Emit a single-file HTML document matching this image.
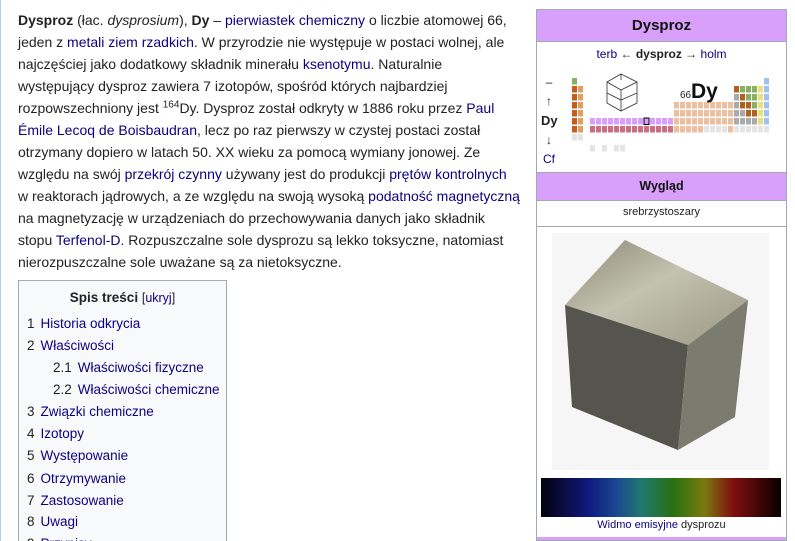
<!DOCTYPE html>
<html><head><meta charset="utf-8"><style>
*{margin:0;padding:0;box-sizing:border-box}
html,body{width:795px;height:541px;overflow:hidden}
body{background:#fff;font-family:"Liberation Sans",sans-serif;color:#222;position:relative}
a{color:#0b0080;text-decoration:none}
.lb{position:absolute;left:0;top:0;width:1px;height:541px;background:#a7d7f9}
.p{position:absolute;left:18px;top:9px;width:512px;font-size:14px;line-height:22px;white-space:nowrap}
.toc{position:absolute;left:18px;top:280px;width:209px;height:261px;background:#f8f9fa;border:1px solid #a2a9b1;border-bottom:none;font-size:13.5px;overflow:hidden}
.toc .t{position:absolute;top:9px;left:0;width:100%;text-align:center;font-weight:bold}
.toc .t span{font-weight:normal;font-size:12.5px}
.toc div.i{position:absolute;left:8px;white-space:nowrap}
.toc .n{color:#222;margin-right:6px}
.ib{position:absolute;left:536px;top:9px;width:251px;height:532px;border:1px solid #a2a9b1;background:#fff}
.h{position:absolute;left:0;width:249px;background:#d8a0fa;text-align:center;font-weight:bold;color:#111}
.c{position:absolute;font-size:12px;text-align:center;white-space:nowrap}
</style></head><body>
<div class="lb"></div>
<div class="p"><b>Dysproz</b> (łac. <i>dysprosium</i>), <b>Dy</b> – <a>pierwiastek chemiczny</a> o liczbie atomowej 66,<br>jeden z <a>metali ziem rzadkich</a>. W przyrodzie nie występuje w postaci wolnej, ale<br>najczęściej jako dodatkowy składnik minerału <a>ksenotymu</a>. Naturalnie<br>występujący dysproz zawiera 7 izotopów, spośród których najbardziej<br>rozpowszechniony jest <sup style="font-size:10px;line-height:0">164</sup>Dy. Dysproz został odkryty w 1886 roku przez <a>Paul</a><br><a>Émile Lecoq de Boisbaudran</a>, lecz po raz pierwszy w czystej postaci został<br>otrzymany dopiero w latach 50. XX wieku za pomocą wymiany jonowej. Ze<br>względu na swój <a>przekrój czynny</a> używany jest do produkcji <a>prętów kontrolnych</a><br>w reaktorach jądrowych, a ze względu na swoją wysoką <a>podatność magnetyczną</a><br>na magnetyzację w urządzeniach do przechowywania danych jako składnik<br>stopu <a>Terfenol-D</a>. Rozpuszczalne sole dysprozu są lekko toksyczne, natomiast<br>nierozpuszczalne sole uważane są za nietoksyczne.</div>

<div class="toc">
<div class="t">Spis treści <span>[<a>ukryj</a>]</span></div>
<div class="i" style="top:35px"><span class="n">1</span><a>Historia odkrycia</a></div>
<div class="i" style="top:57px"><span class="n">2</span><a>Właściwości</a></div>
<div class="i" style="top:79px;left:34px"><span class="n">2.1</span><a>Właściwości fizyczne</a></div>
<div class="i" style="top:101px;left:34px"><span class="n">2.2</span><a>Właściwości chemiczne</a></div>
<div class="i" style="top:123px"><span class="n">3</span><a>Związki chemiczne</a></div>
<div class="i" style="top:145px"><span class="n">4</span><a>Izotopy</a></div>
<div class="i" style="top:167px"><span class="n">5</span><a>Występowanie</a></div>
<div class="i" style="top:190px"><span class="n">6</span><a>Otrzymywanie</a></div>
<div class="i" style="top:212px"><span class="n">7</span><a>Zastosowanie</a></div>
<div class="i" style="top:233px"><span class="n">8</span><a>Uwagi</a></div>
<div class="i" style="top:255px"><span class="n">9</span><a>Przypisy</a></div>
</div>

<div class="ib">
<div class="h" style="top:0;height:31px;line-height:31px;font-size:15px">Dysproz</div>
<div style="position:absolute;top:31px;left:0;width:249px;height:1px;background:#a2a9b1"></div>
<div class="c" style="top:37px;left:0;width:249px;font-size:12px"><a>terb</a> ← <b>dysproz</b> → <a>holm</a></div>
<div class="c" style="left:4px;top:63px;width:16px;font-size:12px;line-height:19px;text-align:center">–<br>↑<br><b style="font-size:13px">Dy</b><br>↓<br><a>Cf</a></div>
<div style="position:absolute;top:162px;left:0;width:249px;height:1px;background:#a2a9b1"></div>
<div class="h" style="top:163px;height:27px;line-height:27px;font-size:12.5px">Wygląd</div>
<div style="position:absolute;top:190px;left:0;width:249px;height:1px;background:#a2a9b1"></div>
<div class="c" style="top:196px;left:0;width:249px;font-size:11px">srebrzystoszary</div>
<div style="position:absolute;top:216px;left:0;width:249px;height:1px;background:#a2a9b1"></div>
<div class="c" style="top:509px;left:0;width:249px;font-size:11px"><a>Widmo emisyjne</a> dysprozu</div>
<div style="position:absolute;top:527px;left:0;width:249px;height:3px;background:#d8a0fa"></div>
</div>

<svg style="position:absolute;left:0;top:0" width="795" height="541">
<defs>
<linearGradient id="sp" x1="0" x2="1"><stop offset="0" stop-color="#02020f"/><stop offset=".08" stop-color="#0a0a3a"/><stop offset=".2" stop-color="#101a80"/><stop offset=".32" stop-color="#1a4a90"/><stop offset=".42" stop-color="#207870"/><stop offset=".55" stop-color="#287010"/><stop offset=".68" stop-color="#7a7a10"/><stop offset=".8" stop-color="#801010"/><stop offset=".92" stop-color="#3a0505"/><stop offset="1" stop-color="#050000"/></linearGradient>
<linearGradient id="tp" x1="0" y1="0" x2="1" y2="1"><stop offset="0" stop-color="#8c8a76"/><stop offset=".45" stop-color="#c4c2b0"/><stop offset="1" stop-color="#9a9884"/></linearGradient>
</defs>
<rect x="552" y="233" width="217" height="237" fill="#f6f6f6"/>
<polygon points="565,305 625,240 748,300 688,345" fill="url(#tp)"/>
<polygon points="565,305 688,345 678,450 572,407" fill="#55554e"/>
<polygon points="688,345 748,300 735,417 678,450" fill="#7c7b70"/>
<rect x="541" y="478" width="240" height="39" fill="url(#sp)"/>
<g fill="none" stroke="#333" stroke-width=".8">
<polygon points="621,74 637,82 637,103 621,111 607,103 607,82"/>
<polyline points="607,82 621,90 637,82"/><line x1="621" y1="90" x2="621" y2="111"/>
<polyline points="607,93 621,100 637,93"/><polyline points="621,74 621,80"/>
</g>
<g id="pt"></g>
<text x="680" y="98" font-size="10" font-family="Liberation Sans" fill="#222">66</text>
<text x="691" y="98" font-size="21" font-weight="bold" font-family="Liberation Sans" fill="#111">Dy</text>
</svg>
<script>
var g=document.getElementById('pt'),s='';
function r(x,y,c){s+='<rect x="'+x+'" y="'+y+'" width="5" height="6.5" fill="'+c+'"/>';}
var Y=function(p){return 78+p*8};
var al='#c06020',ae='#e0a060',fl='#d8a0f8',ac='#c87080',d='#eac0a0',lg='#e4e4e4',gr='#aaa',br='#b06020',gn='#88b060',ye='#e8e080',bl='#a0c0f0';
r(572,Y(0),gn);
for(var p=1;p<7;p++){r(572,Y(p),al);r(578,Y(p),ae);}
r(572,Y(7),lg);r(578,Y(7),lg);
for(var i=0;i<14;i++){r(590+i*6,Y(5),fl);r(590+i*6,Y(6),ac);}
for(p=3;p<6;p++)for(i=0;i<10;i++)r(674+i*6,Y(p),d);
for(i=0;i<10;i++)r(674+i*6,Y(6),(i<5||i==9)?d:lg);
r(764,Y(0),bl);
var P=[[br,gn,gn,gn,ye,bl],[gr,br,gn,gn,ye,bl],[gr,br,br,gn,ye,bl],[gr,gr,br,br,ye,bl],[gr,gr,gr,gr,ye,bl],[lg,lg,lg,lg,lg,lg]];
for(p=0;p<6;p++)for(i=0;i<6;i++)r(734+i*6,Y(p+1),P[p][i]);
[590,602,614,620].forEach(function(x){r(x,145,lg)});
s+='<rect x="644" y="118" width="5" height="6.5" fill="none" stroke="#000" stroke-width="1"/>';
g.innerHTML=s;
</script>
</body></html>
